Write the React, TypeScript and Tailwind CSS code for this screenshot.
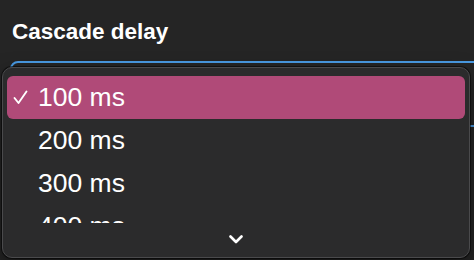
import React from 'react';

const options = ['100 ms', '200 ms', '300 ms', '400 ms'];

export default function App() {
  const selected = '100 ms';

  return (
    <div
      className="w-[474px] h-[260px] overflow-hidden bg-[#252525] text-white"
      style={{ fontFamily: '"Liberation Sans", Arial, sans-serif' }}
    >
      <div className="pl-3 pt-[19px]">
        <h1 className="text-[22.5px] leading-[26px] font-bold">Cascade delay</h1>
      </div>

      {/* Select field with open menu */}
      <div className="relative mt-4">
        <div className="ml-[10px] mr-[-20px] h-[66px] rounded-lg border-2 border-[#4a9be4]" />

        <div className="absolute left-[2px] top-[6px] w-[468px] h-[191px] rounded-[10px] border border-[#4a4a4c] bg-[#2b2b2c] shadow-[0_0_0_1px_rgba(0,0,0,0.5),0_8px_20px_rgba(0,0,0,0.5)] flex flex-col">
          <div className="mx-1 mt-2 h-[147px] overflow-hidden">
            {options.map((opt) => (
              <div
                key={opt}
                className={
                  opt === selected
                    ? 'flex items-center h-[43px] rounded-md bg-[#b04a78]'
                    : 'flex items-center h-[43px] rounded-md'
                }
              >
                <span className="w-[31px] pl-[6px] flex items-center">
                  {opt === selected && (
                    <svg width="15" height="15" viewBox="0 0 15 15" fill="none">
                      <path d="M1.5 8L5.5 13L13.5 1.5" stroke="white" strokeWidth="1.9" strokeLinecap="round" strokeLinejoin="round" />
                    </svg>
                  )}
                </span>
                <span className="text-[26.5px] leading-none">{opt}</span>
              </div>
            ))}
          </div>
          <div className="flex-1 flex items-center justify-center pb-[2px]">
            <svg width="14" height="9" viewBox="0 0 14 9" fill="none">
              <path d="M1.5 1.5L7 7L12.5 1.5" stroke="white" strokeWidth="2.6" strokeLinecap="round" strokeLinejoin="round" />
            </svg>
          </div>
        </div>
      </div>
    </div>
  );
}
